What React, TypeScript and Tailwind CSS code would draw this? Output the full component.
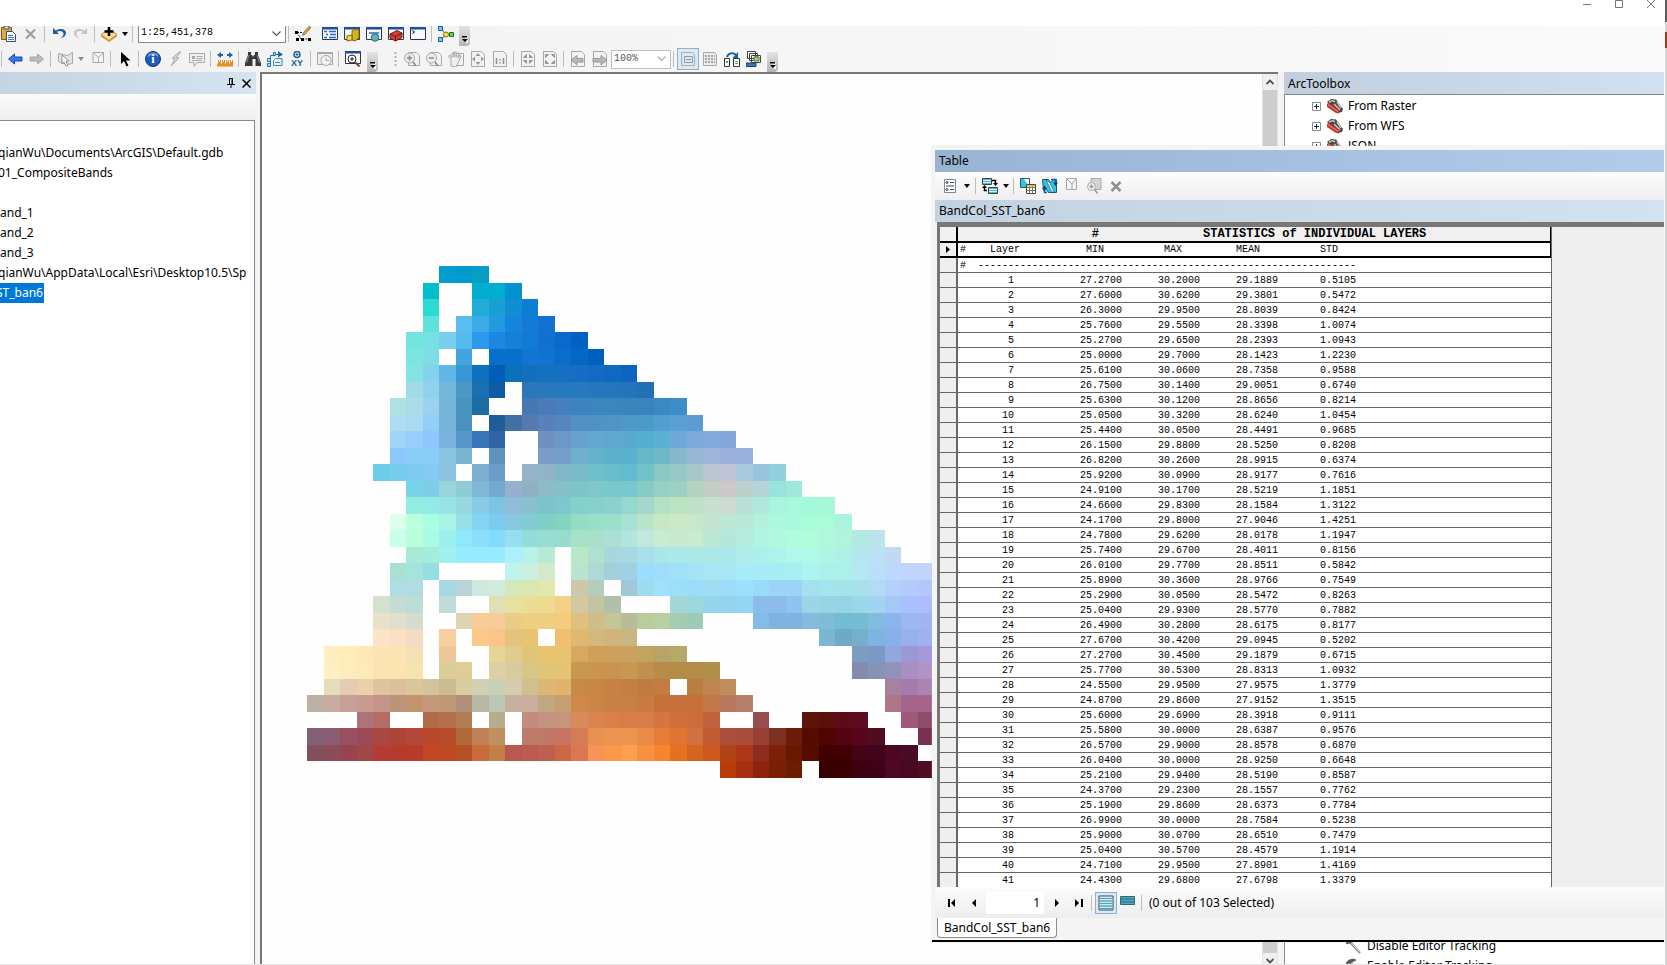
import type { ReactNode } from "react";

/* ---------- raster layer ---------- */

// every run is "firstColumn:colour colour ..." and the row order goes from top to bottom
const RASTER: string[][] = [
  ["8:059cd0 019acd 069ec6"],
  ["7:00bfcb", "10:00afd0 00aecf 0093d0"],
  ["7:2ddad2", "10:22acd9 1a9fd4 108dd3 0c7fd3"],
  ["7:5fe2dc", "9:5abdf0 3aaae8 229ae0 1685de 137ad6 1272d2"],
  ["6:72e5df 78dfe2 78cff0 55b9ee 2c97ee 1c86e0 167fd8 1379d5 1170d0 0a69cc 0062c3"],
  ["6:7de5e0 7fdde6", "9:42a5e0", "11:0870cc 0670cc 1076d2 1173d0 0c6cca 0566c4 0060c0"],
  ["6:84e3e4 85d2ea 60b6e4 3896d6 1070c0 005cb4 0a70b8 1470be 1570c0 1670c2 166ec4 126ac4 0f68c2 0c64c0"],
  ["6:a0dce8 90d2ec 74b8dc 4c98c4 1a70b0 0e5ca6", "13:2a78ba 2a78bc 2878be 2678c0 2476be 2476bc 2474ba 2270b8"],
  ["5:aee0e4 aadde8 9ad2f0 76b4d8 4892c0 1e6ca4", "13:4678b4 4a7aba 4480be 3c84c0 3c86c0 3c86c0 3b85be 3a84be 3c88c4 3e8cc8"],
  ["5:aedcf4 a8daf2 94cdf6 76b4dc 4c90c0", "11:205c98 4070a4 5878b2 5a80ba 5686be 5090c4 5092c4 5094c6 4e98c8 4a9bca 529fd2 5aa0d6 5c9cd4"],
  ["5:a0d4f8 98cefc 90c6fc 7cb4e0 5898c8 3878b8 3064a4", "14:7090c0 6c98c8 66a2cc 64a8d0 5ea8d0 58a8d0 54aecf 5cb0d4 70a8d8 7ca8da 82a8dc 84a6da"],
  ["5:8cc8fa 88cef6 88cef8 8cc4e4 78b4d0", "11:5c92bc", "14:7c9cc8 749fc8 70b0cc 66b2cc 5cb0ca 58b2d0 66b8c8 70b8c8 88b8cc 96b8d4 a0b4d8 9cb0dc 98b0dc"],
  ["4:6cccea 74ceec 7cccf2 84ccf4 8cc4e0", "10:7cb0d0 6c9cc8", "13:96b4c8 90b4c8 80b8c8 78bcc8 70c0cc 68bccc 62bcd0 70c4c8 8cc8c4 98c8c8 a8c8c8 bcc4d0 c0c4d4 a8c8dc 98c4e0 90d0dc"],
  ["6:78d4e8 7ccee8 98d4dc 90ccd8 80b8d8 74aad0 98b0d0 90b0c4 8cbcc8 84c0c8 7cc4c8 80c8c8 78c8cc 78c8d0 84ccc4 94d0c4 9cd0c0 b4d4c0 c4ccc4 ccc8c8 bcd0cc b4d4d8 98e4dc 9ce8dc"],
  ["6:94ece0 90ece4 98e4e4 98d8e0 88cce8 7cc4e4 90bcd8 88c0d0 7cc4cc 7cc8cc 84d0cc 88d0cc 8cd0d0 94d8d0 a4d8cc b4e0c4 bce4c0 c0e0c8 c8e0d0 ccdcd4 b8e0d8 b0e8dc a8f4dc a8f8dc a4f8dc a8f8d8"],
  ["5:dcfff0 bcffdc a8ffe4 a8f4e4 98e0e8 84d4f4 7cccf0 88c8e0 84ccd4 80d0c8 84d4c4 94dcc4 98e0c8 9ce0c8 a8e0d4 b8e4cc c8e8c4 cce8c4 c8e8cc c4e4d0 bce8d4 b8e8d8 b4f0dc acf8dc a8fadc a8fcd8 a8fcd8 a8f4dc"],
  ["5:c8ffe8 b8ffdc a8fce4 9cf0ec 90e8fc 8ce0fc 84dcfc 94e0f0 94dcd8 98dcd4 98dcd0 a8e0c8 a8e0cc ace0d4 b4e4e0 c0e8dc c8ecd0 c8e8d0 c8ecd0 bce8d8 b4e8dc b4ece0 b0f4e4 b0f8e0 b0fcdc b0fcdc b0f8dc b0f4dc b4e8e4 bce4ec"],
  ["6:a8ead8 a4ecdc a0f0f0 98ecfc 98ecff 98ecff acf0fc b8f0ec b8ead8", "16:b8e8c8 b0e0d0 a8d8dc a8d8e4 a8dfe8 a8e8e8 ace8ec ace8e8 ace8e8 ace8ec b0ece8 acf0ec acf4ec b0f8ec b0f8e8 b0f4e4 b0f0e8 b4e8ec bce0f4 c4d8f4"],
  ["5:a8e0d4 a4e4dc 94e0e0", "12:c0f4ec ccf0e0 d4e8cc", "16:b8e4d0 b0d8d4 a4d0dc a0d0e4 9cdcfc a0dcfc a0e0f8 a4e4f4 a8e8f4 a8e8f4 a8ecf8 a8ecf8 a8ecf4 a8f0f0 acf4f0 acf0ec acf0ec b4e8f4 b8e0f8 bcd8fc c0d4fc c0d4fc"],
  ["5:b0dce4 b0dce4", "8:a8d8e4 b8d4d8 d0e8e0 d0ecdc d4e8bc d8e8b0 e0e8b0", "16:ccc8a8 b4ccbc", "19:a0c8d8 9cdcf0 a0e0fc 9ce0f8 9cdcf8 a0dcf4 9cdcf8 9ce0fc 98dcfc 9cd4f8 9cd4f8 a4e0f0 a4e4ec a4e4e8 a8e0ec b0dcf4 b4d0fc b4ccfc b4c8fc"],
  ["4:d4e0d0 c4dcd4 bcdcd8", "8:c0dcd8", "11:e0e0b4 e8e0a0 ecdc98 f0dc90 f4d088 d4c8a0 c4c4a4 b0c0ac", "22:a4d8d8 9cd8dc 94d4ec 94d4ec 94d4f4 8cbcec 8cbcec 90c4f0 9cd4e8 98d4e4 94d4e4 98d8e8 a0d4f0 a4c8f8 a8c0fc acbcfc"],
  ["4:e8e0c8 e4dccc d4dcd0", "9:dcd4b0 f8cc98 f8cc98 e8cc88 ecd080 ecd080 f4cc7c e0c080 d0bc88 c4c494 b8bc98 b8cc9c b8d0a0 a4ccb0 9cccb8", "27:84bce8 80b4e0 80b4e0 84bce0 80bcd8 74bcd0 78bcd4 84bce0 8cb4ec 9cb8f4 a0b4f4"],
  ["4:fce4c8 fce0c4 f4dcc4", "8:f8d0a0", "10:fcc88c fcc488 e4c47c e8c470", "15:f0c070 e0b870 d4b87c d0b47c c8b880", "31:78b8d0 70a8c8 74b0cc 80b4e0 88b0ec 98b0ec a0b0f0"],
  ["1:ffecc0 ffecb8 ffe8b8 fce4b4 fce4b4 f4e0b4", "8:ecc898", "11:e8d498 e0cc8c e0c478 e8c470 e8c470 d8a860 d0a058 cca058 cca060 c0a460 b8a468 b8a868", "33:7c9cc4 7c98c4 90a8dc 9c98d4 a498dc"],
  ["1:fff0c4 ffecbc fceab8 fce4b0 fce4b0 f4e4b0", "8:dccc98 e0cc98", "11:dcd0a4 d8cc9c d8c888 e0c478 e4c474 c89850 cc9450 c89450 c89850 c09050 b88c48 b48c48 b48c48 b09048", "33:848cac 8494b4 9490bc a890c4 b094c8"],
  ["1:e4dcbc e4ccb4 ecd0ac e0c49c dcc09c dcc49c d0c498 ccbc94 d8cca0 d0d0b4 c8d0b8 d4ccac d0c090 dcb874 e0b46c c88848 c88844 c88044 c48044 c07c40 c47c40", "23:b88040 c08450 c08c5c", "35:a880a0 a47cac ac84b4"],
  ["0:bcb0a4 c8aca0 c8a098 c89c90 c49488 bc9478 c4946c c49878 bc9874 b0907c b8b8a4 bcc8b4 c8b0a0 c8b09c c0a880 c8a070 d08848 cc8446 c88044 c88044 c87c40 c47038 c47038 c87038 c27848 b87860 b88068", "35:ac7888 a4648c a4648c"],
  ["3:ac7478 b46c64", "7:b06c48 b4704c b07c54", "11:b8ac8c", "13:c48c80 c49480 c8947c d88c5c dc8450 d88048 d87c48 d87c48 d87440 d07038 cc6c38 c06440", "27:984c4c", "30:5c1408 5c100c 5c0c18 5c0c20", "36:a05878 8c4c6c"],
  ["0:846078 8c5c70 985060 9c4858 a84840 ac4438 b44838 b84828 b84c28 b06838 c08058 c09060", "13:bc7c68 c07868 c87464 d47c58 e89050 ec9450 ec9450 e88c48 e87c34 e07430 d07040 c05c30 ac4c3c a84c3c 984034 7c3020 6c1c08 540c00 540400 540410 58041c 500c20", "37:783050"],
  ["0:84505c 8c4c58 984450 a04848 b43c34 b43c2c b83c28 c44424 c04824 b45024 c86c38 c08048 b85850 bc5c50 bc6050 cc6848 d87850 f89458 fc9848 fca050 f89040 f88430 e47020 d46420 cc5820 b04418 ac3818 8c2c20 7c2008 681800 540c00 400000 400004 440418 40041c 4c0820 480c28"],
  ["25:b83c08 a83010 8c2410 782004 6c1c00", "31:380000 380000 400014 400018 4c0824 480820 500c24"],
];

const CELL = 16.5;
const edge = (n: number) => Math.round(n * CELL);

function Raster() {
  return (
    <svg width="628" height="512" shapeRendering="crispEdges" role="img" aria-label="Composite bands raster">
      {RASTER.map((runs, row) =>
        runs.map((run) => {
          const [start, colours] = run.split(":");
          return colours.split(" ").map((colour, i) => {
            const col = Number(start) + i;
            return (
              <rect
                key={`${row}-${col}`}
                x={edge(col)}
                y={edge(row)}
                width={edge(col + 1) - edge(col)}
                height={edge(row + 1) - edge(row)}
                fill={`#${colour}`}
              />
            );
          });
        })
      )}
    </svg>
  );
}

/* ---------- toolbar parts ---------- */

function Tool({ label, active, children }: { label: string; active?: boolean; children: ReactNode }) {
  return (
    <button
      type="button"
      aria-label={label}
      className={`flex h-[22px] w-[22px] shrink-0 items-center justify-center ${
        active ? "border border-[#8cb0d0] bg-[#dfe8f0]" : ""
      }`}
    >
      <svg width="16" height="16" viewBox="0 0 16 16" fill="none">
        {children}
      </svg>
    </button>
  );
}

function Sep() {
  return <span className="mr-[3px] ml-[2px] h-4 w-px shrink-0 bg-[#bdbdbd]" />;
}

function Drop({ label, dim }: { label: string; dim?: boolean }) {
  return (
    <button type="button" aria-label={label} className="flex h-5 w-[10px] shrink-0 items-center justify-center">
      <svg width="6" height="4" viewBox="0 0 6 4">
        <path d="M0 0h6L3 4z" fill={dim ? "#8a8a8a" : "#000"} />
      </svg>
    </button>
  );
}

function Overflow({ label, className }: { label: string; className: string }) {
  return (
    <button
      type="button"
      aria-label={label}
      className={`flex h-5 w-[11px] shrink-0 items-end justify-center rounded-br bg-linear-to-b from-[#e4e4e4] to-[#b4b4b4] pb-[3px] ${className}`}
    >
      <svg width="6" height="7" viewBox="0 0 6 7">
        <path d="M1 1h5M3 3h4l-2 4z" stroke="#fff" strokeWidth="1" fill="#fff" />
        <path d="M0 0h5v1.5H0zM0 3h6L3 6z" fill="#000" />
      </svg>
    </button>
  );
}

function Chevron({ className }: { className: string }) {
  return (
    <svg width="9" height="6" viewBox="0 0 9 6" fill="none" className={className}>
      <path d="M.5.5l4 4 4-4" stroke="currentColor" strokeWidth="1.2" />
    </svg>
  );
}

const GREY = "#a8a8a8";

// sheet of paper that stands behind most of the layout tools
function Page() {
  return <path d="M4.5 1.5h8l3 3v10h-11z" fill="#f2f2f2" stroke={GREY} />;
}

function FullPage() {
  return <path d="M1.5.5h10l3 3v12h-13z" fill="#f2f2f2" stroke={GREY} />;
}

function Pane({ children }: { children: ReactNode }) {
  return (
    <>
      <path d="M.5 2.5h15v11H.5z" fill="#f6f8fb" stroke="#28384c" />
      <path d="M0 1h16v2.5H0z" fill="#1f4fa0" />
      {children}
    </>
  );
}

function StandardBar() {
  return (
    <div className="flex h-5 items-center pb-[5px]">
      <div className="-ml-[3px] flex items-center">
        <Tool label="Paste">
          <path d="M1.5 1.5h10v12h-10z" fill="#e0a848" stroke="#8a5418" />
          <path d="M4 0h5v3H4z" fill="#d8d8d8" stroke="#555" />
          <path d="M6.5 5.5h6l3 3v7h-9z" fill="#fff" stroke="#35507c" />
          <path d="M8 9.5h5M8 11.5h6M8 13.5h6" stroke="#4a7cc0" />
        </Tool>
        <span className="w-px" />
        <Tool label="Delete">
          <path d="M3 3.500l9 9M12 3.500l-9 9" stroke="#a0a0a0" strokeWidth="2.2" />
        </Tool>
        <Sep />
        <Tool label="Undo">
          <path d="M2 2v6h6l-2.2-2.2C9 4 12.500 5 12.500 8c0 2-1.500 3.200-3.500 4.500 4-1 6-3 6-5.500 0-4-6-5.500-10.500-2.500z" fill="#1f5fa0" />
        </Tool>
        <Tool label="Redo">
          <path d="M14 2v6H8l2.200-2.200C7 4 3.500 5 3.500 8c0 2 1.500 3.200 3.500 4.500-4-1-6-3-6-5.500 0-4 6-5.500 10.500-2.500z" fill="#c4c4c4" />
        </Tool>
        <Sep />
        <Tool label="Add Data">
          <path d="M8 3l8 5.500-8 6-8-6z" fill="#f8dc90" stroke="#b88838" />
          <path d="M0 9l8 6 8-6v1.500L8 16 0 10.500z" fill="#c88c38" />
          <path d="M8 1v9M3.500 5.500h9" stroke="#000" strokeWidth="2.5" />
        </Tool>
        <Drop label="Add Data menu" />
        <Sep />
      </div>
      <div className="ml-[2px] flex h-[17px] w-[148px] items-center self-start border border-t-0 border-[#888] bg-white pr-1">
        <input
          aria-label="Map scale"
          defaultValue="1:25,451,378"
          className="w-full min-w-0 bg-transparent pb-[3px] pl-[2px] font-['Liberation_Mono',monospace] text-[10px] leading-3 text-black outline-none"
        />
        <Chevron className="shrink-0 text-[#555]" />
      </div>
      <Sep />
      <Tool label="Editor Toolbar">
        <path d="M2 6.500h5M2 6.500l4 6.500h8" stroke="#222" strokeDasharray="2 1" />
        <path d="M0 5h3v3H0zM1 12h3v3H1zM6 12h3v3H6zM13 12h3v3h-3z" fill="#000" />
        <path d="M14.500 0l1.500 1.500-6 7-2.500 1 .8-2.800z" fill="#d89848" stroke="#7c5028" strokeWidth=".6" />
      </Tool>
      <div className="ml-[5px] flex items-center">
        <Tool label="Table Of Contents">
          <Pane>
            <path d="M2 5.500h3M7 5.500h7M4 8.500h2M8 8.500h6M2 11.500h3M7 11.500h7" stroke="#2868c0" strokeWidth="1.300" />
          </Pane>
        </Tool>
        <Tool label="Catalog">
          <Pane>
            <path d="M8 5l4-2 3 1v8l-4 3-3-1z" fill="#d4b41c" stroke="#806808" />
            <path d="M3 10l5-1v5l-5 1z" fill="#f0d850" stroke="#806808" />
          </Pane>
        </Tool>
        <Tool label="Search">
          <Pane>
            <path d="M3 6h10v2H3z" fill="#5c90d0" />
            <circle cx="9" cy="11.500" r="3.800" fill="#68b0a8" stroke="#2c6c90" />
          </Pane>
        </Tool>
        <Tool label="ArcToolbox">
          <Pane>
            <path d="M2 8l7-3.500 5 2.500v4.500L7.500 15 2 12z" fill="#d04030" stroke="#701810" />
            <path d="M2 8l5.500 2.500L14 7M7.500 10.500V15" stroke="#701810" />
          </Pane>
        </Tool>
        <Tool label="Python">
          <Pane>
            <path d="M2.500 4.500l2 1.500-2 1.500" stroke="#000" />
          </Pane>
        </Tool>
        <Sep />
        <Tool label="ModelBuilder">
          <path d="M3 3l5 5.500-5 5M8 8.500h4" stroke="#1c6c40" />
          <path d="M.5.5h4v4h-4zM.5 11.500h4v4h-4z" fill="#78c8f8" stroke="#1858a0" />
          <circle cx="8" cy="8.500" r="2.500" fill="#f4e060" stroke="#807010" />
          <path d="M11.500 6.500h4v4h-4z" fill="#60d850" stroke="#207020" />
        </Tool>
      </div>
      <Overflow label="Standard toolbar options" className="ml-[2px] self-start" />
    </div>
  );
}

function ToolsBar() {
  return (
    <div className="flex h-[26px] items-center">
      <span className="mr-[2px] ml-px h-4 w-px bg-[#bdbdbd]" />
      <Tool label="Previous Extent">
        <path d="M1.500 8l6-5v3h7.500v4H7.500v3z" fill="#3878e8" stroke="#1c48a8" />
      </Tool>
      <Tool label="Next Extent">
        <path d="M14.500 8l-6-5v3H1v4h7.500v3z" fill="#bcbcbc" stroke="#a4a4a4" />
      </Tool>
      <Sep />
      <Tool label="Select Features">
        <path d="M1.500 2.500l9 2 5-3v11l-6 1-8-3z" fill="#e4e4e4" stroke={GREY} />
        <path d="M5 4l7 6-3 .5 2 4-2 .5-2-4-2 2z" fill="#fff" stroke="#909090" />
      </Tool>
      <Drop label="Select Features menu" dim />
      <Tool label="Clear Selected Features">
        <path d="M4 1.500h10.500v10H4zM4.500 2l5 4.500v4.500M9.500 6.500l5-5" stroke={GREY} fill="#f4f4f4" />
      </Tool>
      <Sep />
      <Tool label="Select Elements">
        <path d="M4 1v12l3-3 2.500 5.500 2-1L9 9.500h4.500z" fill="#000" />
      </Tool>
      <Sep />
      <Tool label="Identify">
        <circle cx="8" cy="8" r="7.500" fill="#1e5cb8" stroke="#12387c" />
        <path d="M2 6a6.300 6.300 0 0112 0c-4-2-8-2-12 0z" fill="#5c94e0" />
        <text x="8" y="12" textAnchor="middle" fontSize="12" fontWeight="bold" fontFamily="Liberation Serif" fill="#fff">
          i
        </text>
      </Tool>
      <Tool label="Hyperlink">
        <path d="M12 1L5 7.500l3 .5-4 7 8-8-3-.5L14 1z" fill="#d8d8d8" stroke={GREY} />
      </Tool>
      <Tool label="HTML Popup">
        <path d="M.5 2.500h15v9H8l-3 4v-4H.5z" fill="#f0f0f0" stroke={GREY} />
        <path d="M3 5h3v3H3z" fill={GREY} />
        <path d="M7.500 5.500h6M7.500 7.500h6M3 9.500h10" stroke={GREY} />
      </Tool>
      <Sep />
      <Tool label="Measure">
        <path d="M0 4l4-3v2h2v2H4v2zM16 4l-4-3v2h-2v2h2v2z" fill="#1c64a8" />
        <path d="M0 9h16v6.500H0z" fill="#e88c28" />
        <path d="M.5 9v3.500M2.500 9v2M4.500 9v3.500M6.500 9v2M8.500 9v3.500M10.500 9v2M12.500 9v3.500M14.500 9v2" stroke="#fff" />
      </Tool>
      <Sep />
      <Tool label="Find">
        <path d="M3 1h3v3h1l1 2 1-2h1V1h3v3l3 8v3h-5.500V8h-3v7H0v-3l3-8z" fill="#383838" />
        <path d="M4 4L1.500 12M12 4l2.500 8" stroke="#888" />
      </Tool>
      <Tool label="Find Route">
        <path d="M7 3.500h5M3.500 9V4.500h4M3.500 9v4" stroke="#2868a0" />
        <path d="M11 0l5 3.500-5 3z" fill="#1c6890" />
        <path d="M.5 7.500h3v3h-3zM.5 12.500h3v3h-3zM6.500 1.500h2v3h-2z" fill="#b4dcf0" stroke="#2878a8" />
        <path d="M6.500 9.500l2-2h6.500v7H6.500z" fill="#e8f4fa" stroke="#3888b8" />
        <path d="M8 11.500h5" stroke="#3888b8" />
      </Tool>
      <Tool label="Go To XY">
        <circle cx="8" cy="3.500" r="3" stroke="#1c5c98" strokeWidth="1.500" />
        <path d="M8 2v3M6.500 3.500h3" stroke="#1c5c98" />
        <text x="8" y="15" textAnchor="middle" fontSize="9" fontWeight="bold" fontFamily="Liberation Sans" fill="#1c5c98">
          XY
        </text>
      </Tool>
      <Sep />
      <Tool label="Time Slider">
        <path d="M.5 1.500h15v12H.5z" fill="#ececec" stroke={GREY} />
        <path d="M0 2.500h16" stroke={GREY} />
        <circle cx="9" cy="9.500" r="5" fill="#f4f4f4" stroke={GREY} />
        <path d="M9 6.500v3h3" stroke={GREY} />
      </Tool>
      <Sep />
      <Tool label="Create Viewer Window">
        <path d="M.5 1.500h15v11H.5z" fill="#fff" stroke="#28384c" />
        <path d="M0 0h16v2.500H0z" fill="#1f4f90" />
        <circle cx="7" cy="8" r="4" fill="#fff" stroke="#222" />
        <path d="M7 6v4M5 8h4" stroke="#222" />
        <path d="M10 11l4.500 4.500" stroke="#8c4820" strokeWidth="2.200" />
      </Tool>
      <Overflow label="Tools toolbar options" className="ml-[3px] self-end" />
      <svg width="3" height="14" viewBox="0 0 3 14" className="mr-1 ml-4 shrink-0">
        <path d="M1.500 0v14" stroke="#b0b0b0" strokeWidth="2" strokeDasharray="2 2" />
      </svg>
      <Tool label="Zoom In">
        <Page />
        <circle cx="5.500" cy="7" r="5" fill="#ececec" stroke={GREY} />
        <path d="M5.500 4.500v5M3 7h5M9 11l3 4" stroke="#888" strokeWidth="1.500" />
      </Tool>
      <Tool label="Zoom Out">
        <Page />
        <circle cx="5.500" cy="7" r="5" fill="#ececec" stroke={GREY} />
        <path d="M3 7h5M9 11l3 4" stroke="#888" strokeWidth="1.500" />
      </Tool>
      <Tool label="Pan">
        <path d="M4 2.500h11.500v12H9" stroke={GREY} />
        <path d="M3 15V9L.5 5 2 4l2 3V2h2v4-5h2v5l1-4h2l-1 5 2-3 1 1-2 5-3 6z" fill="#eee" stroke={GREY} />
      </Tool>
      <Tool label="Zoom Whole Page">
        <FullPage />
        <path d="M8 2l2.500 3h-5zM8 14l2.500-3h-5zM2 8l3-2.500v5zM14 8l-3-2.500v5z" fill="#999" />
      </Tool>
      <Tool label="Zoom to 100%">
        <FullPage />
        <path d="M4.500 7v6M11.500 7v6M8 8v1.500M8 11v1.500" stroke="#909090" strokeWidth="1.500" />
      </Tool>
      <Sep />
      <Tool label="Fixed Zoom In">
        <FullPage />
        <path d="M3.500 6.500h3v-3zM12.500 6.500h-3v-3zM3.500 9.500h3v3zM12.500 9.500h-3v3z" fill="#999" stroke="#999" />
      </Tool>
      <Tool label="Fixed Zoom Out">
        <FullPage />
        <path d="M3.500 6.500v-3h3zM12.500 6.500v-3h-3zM3.500 9.500v3h3zM12.500 9.500v3h-3z" fill="#999" stroke="#999" />
      </Tool>
      <Sep />
      <Tool label="Go Back To Extent">
        <FullPage />
        <path d="M1 9l6-4.500v3h6v3.500H7v3z" fill="#b8b8b8" stroke="#999" />
      </Tool>
      <Tool label="Go Forward To Extent">
        <FullPage />
        <path d="M15 9L9 4.500v3H1v3.500h8v3z" fill="#b8b8b8" stroke="#999" />
      </Tool>
      <div className="flex h-[19px] w-[60px] shrink-0 items-center border border-[#c0c0c0] bg-white pr-1">
        <input
          aria-label="Zoom percentage"
          defaultValue="100%"
          className="w-full min-w-0 bg-transparent pl-[2px] font-['Liberation_Mono',monospace] text-[10px] leading-4 text-[#555] outline-none"
        />
        <Chevron className="shrink-0 text-[#aaa]" />
      </div>
      <Sep />
      <Tool label="Toggle Draft Mode" active>
        <path d="M1.500 1.500h11l2 2v11h-13z" stroke="#a4b0bc" />
        <path d="M4.500 5.500h8v6h-8zM6 8.500h5" stroke="#8c9cac" />
      </Tool>
      <Tool label="Focus Data Frame">
        <path d="M1.500 1.500h11l2 2v11h-13z" fill="#ececec" stroke={GREY} />
        <path d="M3 5h10M3 8h10M3 11h10" stroke={GREY} strokeWidth="2" strokeDasharray="2 1" />
      </Tool>
      <Tool label="Change Layout">
        <path d="M3 6c1-4 6-5 9-2" stroke="#1860a8" strokeWidth="2" />
        <path d="M14 1v6H8.500z" fill="#1860a8" />
        <path d="M.5 7.500h5v8h-5zM9.500 7.500h6v8h-6z" fill="#fff" stroke="#333" />
        <path d="M2 10h2v2H2zM11 10h3v1h-3zM11 12h3v1h-3z" fill="#60a060" />
      </Tool>
      <Tool label="Data Driven Pages">
        <path d="M1.500.5h8v7h-8zM3.500 2.500h8v7h-8zM5.500 4.500h9v7h-9z" fill="#fff" stroke="#444" />
        <path d="M8 6h5v4H8z" fill="#a8d088" stroke="#507838" />
        <path d="M0 12h10v3.500H0z" fill="#3878b8" stroke="#1c4470" />
      </Tool>
      <Overflow label="Layout toolbar options" className="ml-[2px] self-end" />
    </div>
  );
}

/* ---------- panels ---------- */

function ContentsPanel() {
  return (
    <aside className="flex w-[256px] shrink-0 flex-col">
      <header className="flex h-[22px] items-center justify-end gap-[7px] bg-linear-to-r from-[#c5d4e2] to-[#d6e3f0] pr-[5px]">
        <button type="button" aria-label="Auto hide">
          <svg width="8" height="10" viewBox="0 0 8 10" fill="none">
            <path d="M2 .5h4M2.500 0v6M5.500 0v6M0 6.500h8M4 6v4" stroke="#000" />
            <path d="M5 1v5" stroke="#000" />
          </svg>
        </button>
        <button type="button" aria-label="Close table of contents">
          <svg width="9" height="9" viewBox="0 0 9 9">
            <path d="M.5.5l8 8M8.500.5l-8 8" stroke="#000" strokeWidth="1.500" />
          </svg>
        </button>
      </header>
      <div className="h-[26px] bg-linear-to-b from-[#fafafa] to-[#efefef]" />
      <div className="mr-px min-h-0 flex-1 overflow-hidden border-t border-r border-[#828790] bg-white pt-[22px]">
        <ul className="-ml-1 leading-5 whitespace-nowrap">
          <li className="pl-[2px]">qianWu\Documents\ArcGIS\Default.gdb</li>
          <li className="pl-[2px]">01_CompositeBands</li>
          <li className="h-5" />
          <li className="pl-1">and_1</li>
          <li className="pl-1">and_2</li>
          <li className="pl-1">and_3</li>
          <li className="pl-[2px]">qianWu\AppData\Local\Esri\Desktop10.5\Sp</li>
          <li>
            <span className="inline-block bg-[#0078d7] pr-px text-white">ST_ban6</span>
          </li>
        </ul>
      </div>
    </aside>
  );
}

function MapView() {
  return (
    <main className="flex min-w-0 flex-1 border-t-2 border-l-2 border-[#777]">
      <div className="min-w-0 flex-1 overflow-hidden bg-[#fefefe] pt-48 pl-[45px]">
        <Raster />
      </div>
      <div className="flex w-[16px] flex-col border-r border-l border-[#e2e2e2] bg-[#f0f0f0]">
        <button type="button" aria-label="Scroll up" className="flex h-4 items-center justify-center text-[#505050]">
          <svg width="8" height="6" viewBox="0 0 8 6" fill="none">
            <path d="M.5 5L4 1.500 7.500 5" stroke="currentColor" strokeWidth="1.800" />
          </svg>
        </button>
        <div className="flex-1 bg-[#cdcdcd]" />
        <button type="button" aria-label="Scroll down" className="flex h-[11px] items-end justify-center text-[#505050]">
          <svg width="8" height="6" viewBox="0 0 8 6" fill="none">
            <path d="M.5 1L4 4.500 7.500 1" stroke="currentColor" strokeWidth="1.800" />
          </svg>
        </button>
      </div>
    </main>
  );
}

function Toolset({ name }: { name: string }) {
  return (
    <li className="flex h-5 items-center">
      <svg width="9" height="9" viewBox="0 0 9 9" className="mr-[6px] shrink-0">
        <path d="M.5.5h8v8h-8z" fill="#fff" stroke="#848c98" />
        <path d="M2 4.500h5M4.500 2v5" stroke="#223" />
      </svg>
      <svg width="16" height="16" viewBox="0 0 16 16" className="mr-[5px] shrink-0">
        <path d="M0 4l4-3 5 .5 7 9.500-1 3-4 1z" fill="#4c4a46" />
        <path d="M2 4l4-1.500 2 1.500M7 6l6 6M10 4l4 6" stroke="#c8c4bc" strokeWidth="1.500" fill="none" />
        <path d="M0 6l2-1 10 7v3.500l-3-.5L0 9z" fill="#c8342c" />
        <path d="M1 6.500l10 7" stroke="#f09088" />
      </svg>
      {name}
    </li>
  );
}

function ScriptTool({ name }: { name: string }) {
  return (
    <li className="flex h-5 items-center">
      <svg width="16" height="16" viewBox="0 0 16 16" className="mr-[6px] shrink-0">
        <path d="M1 5l3-3 4-1 3 1-4 2-1 2-2-1-2 1z" fill="#5c5c5c" stroke="#333" strokeWidth=".6" />
        <path d="M6 5l9 10" stroke="#8c8c84" strokeWidth="2.500" />
        <path d="M6.500 5l8.500 9.500" stroke="#e4e0d0" />
      </svg>
      {name}
    </li>
  );
}

function ToolboxPanel() {
  return (
    <aside className="ml-[6px] flex w-[380px] shrink-0 flex-col">
      <header className="flex h-[22px] items-center bg-linear-to-r from-[#c0cedd] to-[#d2e1ef] pt-px pl-1">ArcToolbox</header>
      <div className="flex min-h-0 flex-1 flex-col justify-between overflow-hidden border-t border-l border-[#828790] bg-white pt-px">
        <ul className="pl-[27px]">
          <Toolset name="From Raster" />
          <Toolset name="From WFS" />
          <Toolset name="JSON" />
        </ul>
        <ul className="-mb-3 pl-[60px]">
          <ScriptTool name="Disable Editor Tracking" />
          <ScriptTool name="Enable Editor Tracking" />
        </ul>
      </div>
    </aside>
  );
}

/* ---------- attribute table window ---------- */

const STATS = `27.2700 30.2000 29.1889 0.5105
27.6000 30.6200 29.3801 0.5472
26.3000 29.9500 28.8039 0.8424
25.7600 29.5500 28.3398 1.0074
25.2700 29.6500 28.2393 1.0943
25.0000 29.7000 28.1423 1.2230
25.6100 30.0600 28.7358 0.9588
26.7500 30.1400 29.0051 0.6740
25.6300 30.1200 28.8656 0.8214
25.0500 30.3200 28.6240 1.0454
25.4400 30.0500 28.4491 0.9685
26.1500 29.8800 28.5250 0.8208
26.8200 30.2600 28.9915 0.6374
25.9200 30.0900 28.9177 0.7616
24.9100 30.1700 28.5219 1.1851
24.6600 29.8300 28.1584 1.3122
24.1700 29.8000 27.9046 1.4251
24.7800 29.6200 28.0178 1.1947
25.7400 29.6700 28.4011 0.8156
26.0100 29.7700 28.8511 0.5842
25.8900 30.3600 28.9766 0.7549
25.2900 30.0500 28.5472 0.8263
25.0400 29.9300 28.5770 0.7882
26.4900 30.2800 28.6175 0.8177
27.6700 30.4200 29.0945 0.5202
27.2700 30.4500 29.1879 0.6715
25.7700 30.5300 28.8313 1.0932
24.5500 29.9500 27.9575 1.3779
24.8700 29.8600 27.9152 1.3515
25.6000 29.6900 28.3918 0.9111
25.5800 30.0000 28.6387 0.9576
26.5700 29.9000 28.8578 0.6870
26.0400 30.0000 28.9250 0.6648
25.2100 29.9400 28.5190 0.8587
24.3700 29.2300 28.1557 0.7762
25.1900 29.8600 28.6373 0.7784
26.9900 30.0000 28.7584 0.5238
25.9000 30.0700 28.6510 0.7479
25.0400 30.5700 28.4579 1.1914
24.7100 29.9500 27.8901 1.4169
24.4300 29.6800 27.6798 1.3379`
  .split("\n")
  .map((line) => line.split(" "));

const SELECTOR = "border-r-2 border-b-2 border-black bg-[#efefef]";

function StatsTable() {
  return (
    <table className="w-[612px] table-fixed border-separate border-spacing-0 border-r border-[#666] bg-white text-right font-['Liberation_Mono',monospace] text-[10px] leading-[13px] text-black [&_td]:h-[15px] [&_td]:p-0">
      <colgroup>
        <col className="w-[18px]" />
        <col className="w-5" />
        <col className="w-[42px]" />
        <col className="w-[102px]" />
        <col className="w-[78px]" />
        <col className="w-[78px]" />
        <col className="w-[78px]" />
        <col />
      </colgroup>
      <thead>
        <tr className="bg-[#f1eff0] text-[12px] leading-[14px] font-bold">
          <th className="h-4 border-r-2 border-b-2 border-black p-0" />
          <th colSpan={3} className="border-b-2 border-black p-0 pr-[23px]">#</th>
          <th colSpan={4} className="border-r border-b-2 border-black p-0 pl-[81px] text-left whitespace-nowrap">
            STATISTICS of INDIVIDUAL LAYERS
          </th>
        </tr>
      </thead>
      <tbody>
        <tr className="[&>td]:border-b-2 [&>td]:border-black">
          <td className={SELECTOR}>
            <svg width="4" height="7" viewBox="0 0 4 7" className="mx-auto">
              <path d="M0 0l4 3.500L0 7z" fill="#000" />
            </svg>
          </td>
          <td><span className="block pl-[2px] text-left">#</span></td>
          <td>Layer</td>
          <td><span className="pr-[18px]">MIN</span></td>
          <td><span className="pr-[18px]">MAX</span></td>
          <td><span className="pr-[18px]">MEAN</span></td>
          <td><span className="pr-[18px]">STD</span></td>
          <td className="border-r border-black" />
        </tr>
        <tr className="[&>td]:border-b [&>td]:border-[#666]">
          <td className={SELECTOR} />
          <td><span className="block pl-[2px] text-left">#</span></td>
          <td colSpan={5} className="whitespace-nowrap">{"-".repeat(63)}</td>
          <td />
        </tr>
        {STATS.map(([min, max, mean, std], i) => (
          <tr key={i} className="[&>td]:border-b [&>td]:border-[#666]">
            <td className={SELECTOR} />
            <td />
            <td><span className="pr-[6px]">{i + 1}</span></td>
            <td>{min}</td>
            <td>{max}</td>
            <td>{mean}</td>
            <td>{std}</td>
            <td />
          </tr>
        ))}
      </tbody>
    </table>
  );
}

function NavButton({ label, d }: { label: string; d: string }) {
  return (
    <button type="button" aria-label={label} className="flex h-5 w-[22px] items-center justify-center">
      <svg width="9" height="8" viewBox="0 0 9 8">
        <path d={d} fill="#000" />
      </svg>
    </button>
  );
}

function TableWindow() {
  return (
    <section className="absolute top-[146px] right-[3px] w-[732px] border-b-2 border-black bg-[#f4f4f4] pt-1 pl-[3px] shadow-[0_0_1px_#c8c0a8]">
      <h2 className="flex h-[22px] items-center bg-linear-to-r from-[#98b4d4] to-[#b1cdea] pl-1">Table</h2>
      <div className="flex h-7 items-center bg-linear-to-b from-[#fdfdfd] to-[#efefef] pl-[5px]">
        <Tool label="Table Options">
          <path d="M1.500 1.500h11v13h-11z" fill="#fff" stroke="#7888a0" />
          <path d="M7 4.500h4M7 11.500h4M3 8h8" stroke="#444" />
          <circle cx="4" cy="4.500" r="1" fill="#fff" stroke="#333" />
          <circle cx="4" cy="11.500" r="1" fill="#fff" stroke="#333" />
        </Tool>
        <Drop label="Table Options menu" />
        <span className="w-px" />
        <Sep />
        <Tool label="Related Tables">
          <path d="M.5.5h9v6h-9z" fill="#60b4c8" stroke="#284850" />
          <path d="M6.500 9.500h9v6h-9z" fill="#60b4c8" stroke="#284850" />
          <path d="M1 2.500h8M1 4.500h8M7 11.500h8M7 13.500h8" stroke="#d8f0f8" />
          <path d="M10 2.500h3.500V6M5 12.500H2.500V9" stroke="#000" strokeWidth="1.500" />
          <path d="M11 5h5l-2.500 3zM0 10h5L2.500 7z" fill="#000" />
        </Tool>
        <Drop label="Related Tables menu" />
        <Sep />
        <Tool label="Select By Attributes">
          <path d="M.5.5h9v9h-9z" fill="#30c4e0" stroke="#205870" />
          <path d="M4 1l5 7V1z" fill="#fff" />
          <path d="M6.500 6.500h9v9h-9z" fill="#fff" stroke="#504830" />
          <path d="M7 9.500h8M7 12.500h8M9.500 7v8M12.500 7v8" stroke="#807850" />
          <path d="M7 7h8v1.500H7z" fill="#c8b878" />
        </Tool>
        <Tool label="Switch Selection">
          <path d="M.5 1.500h6l2 3 3-3h3v13h-8l-2-3-3 1z" fill="#30c4e0" stroke="#205870" />
          <path d="M4 2l6 12h2L8 5z" fill="#fff" stroke="#205870" strokeWidth=".6" />
          <path d="M9 1.500h4.500V6M5 14.500H2.500V10" stroke="#1858a8" strokeWidth="1.500" />
          <path d="M11 4.500h5L13.500 8zM0 11h5L2.500 7.500z" fill="#103c78" />
        </Tool>
        <Tool label="Clear Selection">
          <path d="M2.500.5h10v11h-10zM3 1l5 5v5M8 6l4-5" stroke={GREY} fill="#f4f4f4" />
        </Tool>
        <Tool label="Zoom To Selected">
          <path d="M5 .5h10v11H5z" fill="#d4d4d4" stroke={GREY} />
          <circle cx="5.500" cy="8.500" r="4" fill="#f0f0f0" stroke={GREY} />
          <path d="M5.500 6.500v4M3.500 8.500h4M8.500 11.500l3 4" stroke="#989898" strokeWidth="1.500" />
        </Tool>
        <Tool label="Delete Selected">
          <path d="M3.500 4l9 9M12.500 4l-9 9" stroke="#909090" strokeWidth="2.500" />
        </Tool>
      </div>
      <h3 className="flex h-[22px] items-center bg-linear-to-r from-[#c2d2e0] to-[#d3e2f0] pl-1">BandCol_SST_ban6</h3>
      <div className="ml-[2px] h-[665px] overflow-hidden border-t-[5px] border-l-[3px] border-[#777] bg-[#efefef]">
        <StatsTable />
      </div>
      <div className="flex h-[31px] items-center bg-linear-to-b from-[#fcfcfc] to-[#ededed] pl-[6px]">
        <NavButton label="First record" d="M0 0h2v8H0zM7 0v8L3 4z" />
        <NavButton label="Previous record" d="M6 0v8L2 4z" />
        <input
          aria-label="Record number"
          defaultValue="1"
          className="mx-px h-[22px] w-[58px] bg-white pr-1 text-right outline-none"
        />
        <NavButton label="Next record" d="M3 0v8l4-4z" />
        <NavButton label="Last record" d="M1 0v8l4-4zM7 0h2v8H7z" />
        <Sep />
        <Tool label="Show all records" active>
          <path d="M1 1h14v14H1z" fill="#fff" stroke="#28485c" />
          <path d="M2 3.500h12M2 6h12M2 8.500h12M2 11h12M2 13.500h12" stroke="#4ca4bc" strokeWidth="1.500" />
        </Tool>
        <Tool label="Show selected records">
          <path d="M.5 1.500h14v8H.5z" fill="#50a8c0" stroke="#386474" />
          <path d="M1 4h13M1 7h13" stroke="#286880" />
        </Tool>
        <Sep />
        <span className="pl-1">(0 out of 103 Selected)</span>
      </div>
      <div className="flex h-[22px] items-start pl-[2px]">
        <button type="button" className="h-5 rounded-b border border-t-0 border-[#8c8c8c] bg-white px-[6px] leading-[18px]">
          BandCol_SST_ban6
        </button>
      </div>
    </section>
  );
}

export default function App() {
  return (
    <div className="relative flex h-screen overflow-hidden bg-[#f4f4f4] font-['Noto_Sans',sans-serif] text-[12px] text-black">
      <div className="flex min-w-0 flex-1 flex-col">
        <div className="flex h-[26px] shrink-0 items-start justify-end bg-white pr-2 text-[#777]">
          <button type="button" aria-label="Minimize" className="flex h-2 w-8 justify-end">
            <svg width="9" height="9" viewBox="0 0 9 9"><path d="M0 4.500h8" stroke="currentColor" /></svg>
          </button>
          <button type="button" aria-label="Maximize" className="flex h-2 w-8 justify-end">
            <svg width="9" height="9" viewBox="0 0 9 9" fill="none"><path d="M.5.5h7v7h-7z" stroke="currentColor" /></svg>
          </button>
          <button type="button" aria-label="Close" className="flex h-2 w-8 justify-end">
            <svg width="9" height="9" viewBox="0 0 9 9"><path d="M0 0l8 8M8 0L0 8" stroke="currentColor" /></svg>
          </button>
        </div>
        <div className="shrink-0 bg-linear-to-r from-[#f2f2f2] to-[#fafafa]">
          <StandardBar />
          <ToolsBar />
        </div>
        <div className="flex min-h-0 flex-1 border-b border-[#e4e4e4]">
          <ContentsPanel />
          <span className="w-1 shrink-0" />
          <MapView />
          <ToolboxPanel />
        </div>
      </div>
      {/* sliver of the window that lies behind */}
      <div className="flex w-[3px] shrink-0 flex-col border-l border-white bg-[#d4d4d4]">
        <div className="h-[22px] bg-[#5c5c5c]" />
        <div className="h-[10px]" />
        <div className="h-4 bg-[#a03c10]" />
      </div>
      <TableWindow />
    </div>
  );
}
